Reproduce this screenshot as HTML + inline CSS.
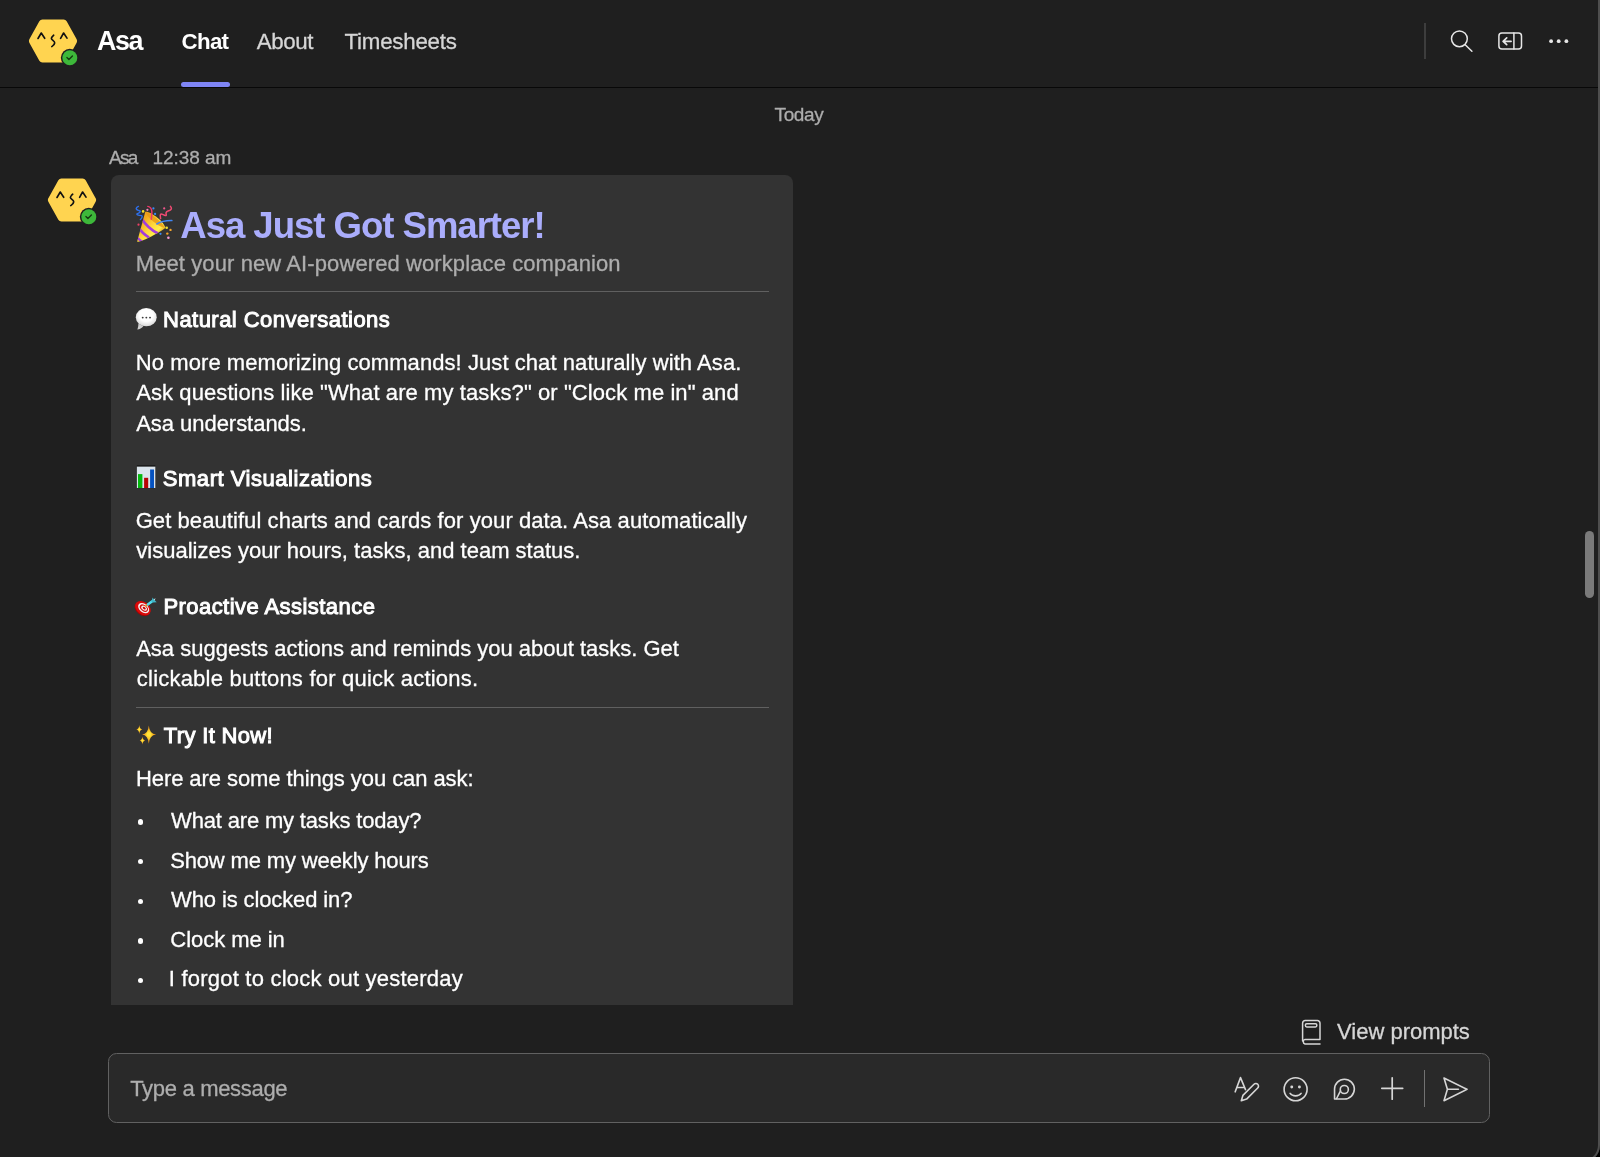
<!DOCTYPE html>
<html lang="en"><head><meta charset="utf-8"><title>Asa - Chat</title>
<style>
html,body{margin:0;padding:0;background:#1f1f1f;}
body{width:1600px;height:1157px;position:relative;overflow:hidden;font-family:"Liberation Sans", sans-serif;}
#root{position:absolute;left:0;top:0;width:1600px;height:1157px;will-change:transform}
.t{position:absolute;white-space:pre;font-family:"Liberation Sans", sans-serif;}
.i{position:absolute}
svg{display:block;width:100%;height:100%;overflow:visible}
#hdrline{position:absolute;left:0;top:86.8px;width:1598px;height:1.3px;background:#080808}
#tabline{position:absolute;left:181px;top:82px;width:49px;height:4.6px;border-radius:2.5px;background:#7f85f5}
#hdrsep{position:absolute;left:1424.4px;top:23px;width:1.3px;height:36px;background:#3d3d3d}
#card{position:absolute;left:111px;top:175px;width:682px;height:880px;background:#333333;border-radius:8px}
#cardmask{position:absolute;left:0;top:1004.7px;width:1600px;height:160px;background:#1f1f1f}
.rule{position:absolute;left:136px;width:633px;height:1.3px;background:#606060}
.bul{position:absolute;left:137.9px;width:5.4px;height:5.4px;border-radius:50%;background:#fff}
#compose{position:absolute;left:108.2px;top:1053.2px;width:1382px;height:69.9px;box-sizing:border-box;border:1.6px solid #616161;border-radius:8.5px;background:#292929}
#compsep{position:absolute;left:1423.5px;top:1070.2px;width:1.2px;height:36.5px;background:#727272}
#thumb{position:absolute;left:1584.8px;top:530.8px;width:9.2px;height:67px;border-radius:4.6px;background:#7a7a7a}
#winedge{position:absolute;left:-20px;top:-20px;width:1620px;height:1183px;box-sizing:border-box;border:2px solid #4e4e4e;border-radius:18px;box-shadow:0 0 0 40px #000;pointer-events:none}
</style></head>
<body>
<div id="root">
<div id="hdrline"></div>
<div class="i" style="left:25.3px;top:16px;width:56px;height:50px"><svg viewBox="-28 -25 56 50"><polygon points="-20.6,0 -10.6,-18.05 10.6,-18.05 20.6,0 10.6,18.05 -10.6,18.05" fill="#ffd450" stroke="#ffd450" stroke-width="7" stroke-linejoin="round"/><g fill="none" stroke="#111" stroke-width="1.65" stroke-linecap="round" stroke-linejoin="round"><path d="M-15,-2.5 L-11.75,-8 L-8.3,-2.7"/><path d="M7.6,-2.7 L10.6,-8 L14,-2.9"/><path d="M0.7,-5.8 C-0.6,-4.6 -1.7,-3.4 -1.6,-2.4 C-1.4,-0.9 1.8,0 1.7,1.9 C1.6,3.4 0.2,4.8 -1.2,5.6"/></g><circle cx="16.8" cy="16.8" r="9" fill="#1f1f1f"/><circle cx="16.8" cy="16.8" r="7.5" fill="#3db83a"/><path d="M13.9,16.6 L15.9,18.4 L19.4,15" fill="none" stroke="#14380f" stroke-width="1.4" stroke-linecap="round" stroke-linejoin="round"/></svg></div>
<div class="t" style="left:97.00px;top:22.00px;font-size:26.9px;line-height:38px;color:#ffffff;font-weight:700;letter-spacing:-1.387px;">Asa</div>
<div class="t" style="left:181.60px;top:26.00px;font-size:22.3px;line-height:31px;color:#ffffff;font-weight:700;letter-spacing:-0.707px;">Chat</div>
<div class="t" style="left:256.75px;top:26.00px;font-size:22.3px;line-height:31px;color:#d6d6d6;font-weight:400;letter-spacing:-0.393px;-webkit-text-stroke:0.3px #d6d6d6;">About</div>
<div class="t" style="left:344.55px;top:26.00px;font-size:22.3px;line-height:31px;color:#d6d6d6;font-weight:400;letter-spacing:-0.229px;-webkit-text-stroke:0.3px #d6d6d6;">Timesheets</div>
<div id="tabline"></div>
<div id="hdrsep"></div>
<div class="i" style="left:1447px;top:27px;width:28px;height:28px"><svg viewBox="0 0 28 28"><g fill="none" stroke="#e6e6e6" stroke-width="1.5" stroke-linecap="round"><circle cx="12.4" cy="11.8" r="7.9"/><path d="M18.2,17.7 L24.9,24.3"/></g></svg></div>
<div class="i" style="left:1496px;top:28px;width:28px;height:26px"><svg viewBox="0 0 28 26"><g fill="none" stroke="#e6e6e6" stroke-width="1.5" stroke-linecap="round" stroke-linejoin="round"><rect x="2.9" y="4.9" width="22.6" height="16.1" rx="3"/><path d="M17.9,5 V21"/><path d="M15.1,13.3 H7.2 M10.7,9.9 L7.1,13.3 L10.7,16.6" stroke-width="1.7"/></g></svg></div>
<div class="i" style="left:1546px;top:35px;width:26px;height:12px"><svg viewBox="0 0 26 12"><g fill="#e6e6e6"><circle cx="5.1" cy="6.2" r="1.9"/><circle cx="12.7" cy="6.2" r="1.9"/><circle cx="20.4" cy="6.2" r="1.9"/></g></svg></div>
<div class="t" style="left:774.55px;top:101.00px;font-size:19px;line-height:27px;color:#adadad;font-weight:400;letter-spacing:-0.375px;-webkit-text-stroke:0.3px #adadad;">Today</div>
<div class="t" style="left:109.05px;top:144.00px;font-size:19px;line-height:27px;color:#adadad;font-weight:400;letter-spacing:-1.686px;-webkit-text-stroke:0.3px #adadad;">Asa</div>
<div class="t" style="left:152.55px;top:144.00px;font-size:19px;line-height:27px;color:#adadad;font-weight:400;letter-spacing:-0.070px;-webkit-text-stroke:0.3px #adadad;">12:38 am</div>
<div class="i" style="left:43.75px;top:174.5px;width:56px;height:50px"><svg viewBox="-28 -25 56 50"><polygon points="-20.6,0 -10.6,-18.05 10.6,-18.05 20.6,0 10.6,18.05 -10.6,18.05" fill="#ffd450" stroke="#ffd450" stroke-width="7" stroke-linejoin="round"/><g fill="none" stroke="#111" stroke-width="1.65" stroke-linecap="round" stroke-linejoin="round"><path d="M-15,-2.5 L-11.75,-8 L-8.3,-2.7"/><path d="M7.6,-2.7 L10.6,-8 L14,-2.9"/><path d="M0.7,-5.8 C-0.6,-4.6 -1.7,-3.4 -1.6,-2.4 C-1.4,-0.9 1.8,0 1.7,1.9 C1.6,3.4 0.2,4.8 -1.2,5.6"/></g><circle cx="16.8" cy="16.8" r="9" fill="#1f1f1f"/><circle cx="16.8" cy="16.8" r="7.5" fill="#3db83a"/><path d="M13.9,16.6 L15.9,18.4 L19.4,15" fill="none" stroke="#14380f" stroke-width="1.4" stroke-linecap="round" stroke-linejoin="round"/></svg></div>
<div id="card"></div>
<div class="i" style="left:130px;top:200px;width:50px;height:48px"><svg viewBox="0 0 50 48"><defs><linearGradient id="pc" x1="0.15" y1="0.35" x2="0.75" y2="0.9"><stop offset="0" stop-color="#f2a81d"/><stop offset="0.45" stop-color="#ffd93b"/><stop offset="0.75" stop-color="#fff04a"/><stop offset="1" stop-color="#e39a14"/></linearGradient><clipPath id="pk"><path d="M7.1,41.8 L15.3,11.8 C20,10.5 34.5,22 35.4,27.9 C30,32 14,41 7.1,41.8 Z"/></clipPath></defs>
<path d="M7.1,41.8 L15.3,11.8 C20,10.5 34.5,22 35.4,27.9 C30,32 14,41 7.1,41.8 Z" fill="url(#pc)"/>
<g clip-path="url(#pk)" fill="none" stroke="#a23ddb" stroke-width="2.6"><path d="M11.5,18.5 C15,24 21,30 28,33.5"/><path d="M8.5,27.5 C11,31.5 15,35 19,37.5"/><path d="M5.5,35.8 C7.5,38 9.5,40 12,41.5" stroke-width="2.2"/></g>
<path d="M15.6,12.2 C19.5,12 33,22.5 34.6,27.6 C30.5,28 17,17.5 15.6,12.2 Z" fill="#e89a17" opacity="0.85"/>
<g fill="none" stroke-linecap="round" stroke-linejoin="round">
<path d="M8.4,6.4 C5.5,7.6 5.6,9.4 8,10.2 C11.6,11 10.4,12.6 7.4,13.6 C5.8,14.4 8,15.4 11.6,15.6 C13,16.4 11.5,18.4 10.4,19.6" stroke="#2f6fe8" stroke-width="1.45"/>
<path d="M17.8,6.4 C20.6,6.8 21.8,9.4 21.9,12 C21.9,14.6 21.5,17 21.3,19.2" stroke="#f0376a" stroke-width="1.45"/>
<path d="M40.5,6.4 C42,8 41.6,9.6 40,10.3 C37.6,11 36,11.6 36,13 C36.2,14.6 36.8,15.6 35.4,15.6 C33.4,15.2 31.6,13 30.6,14.2 C29.8,15.4 30.4,17 30.6,18.6" stroke="#f04a72" stroke-width="1.5"/>
<path d="M26.8,23.9 C31,21.4 36,20.4 41.8,20.5" stroke="#3f86f5" stroke-width="1.7"/></g>
<circle cx="13.1" cy="11.4" r="1.3" fill="#f5e12e"/><circle cx="17.4" cy="9.8" r="1.1" fill="#f58ac2"/><circle cx="23.4" cy="8.4" r="1.1" fill="#3a8bf5"/><circle cx="25.1" cy="13.9" r="1.1" fill="#3a8bf5"/><circle cx="34.2" cy="8.4" r="1.1" fill="#f0568c"/><circle cx="8.5" cy="24.7" r="1.1" fill="#ee3f66"/><circle cx="36.7" cy="27.7" r="1.3" fill="#f5e12e"/><circle cx="40.5" cy="29.9" r="1.2" fill="#f5a62e"/><circle cx="37.3" cy="33.6" r="1.2" fill="#f5a21e"/><circle cx="30.5" cy="33.8" r="1.1" fill="#3a8bf5"/><circle cx="38.4" cy="37.8" r="1.3" fill="#f59ad0"/></svg></div>
<div class="t" style="left:180.25px;top:200.00px;font-size:36.6px;line-height:51px;color:#aaadfc;font-weight:700;letter-spacing:-1.039px;">Asa Just Got Smarter!</div>
<div class="t" style="left:135.75px;top:248.00px;font-size:22px;line-height:31px;color:#adadad;font-weight:400;letter-spacing:0.099px;-webkit-text-stroke:0.3px #adadad;">Meet your new AI-powered workplace companion</div>
<div class="rule" style="top:290.8px"></div>
<div class="i" style="left:130px;top:304px;width:32px;height:30px"><svg viewBox="0 0 32 30"><defs><radialGradient id="sg" cx="0.5" cy="0.4" r="0.6"><stop offset="0.55" stop-color="#ffffff"/><stop offset="1" stop-color="#d9d9d9"/></radialGradient></defs><path d="M8.4,19.6 C8.4,22 8,24 7.3,25.6 C9.6,25.2 11.8,23.9 13.4,22.2 Z" fill="#cfcfcf"/><ellipse cx="16.25" cy="13.2" rx="10.45" ry="9.1" fill="url(#sg)"/><g fill="#3a3a3a"><circle cx="12.7" cy="13.6" r="0.95"/><circle cx="16.35" cy="13.6" r="0.95"/><circle cx="20" cy="13.6" r="0.95"/></g></svg></div>
<div class="t" style="left:163.10px;top:304.00px;font-size:22px;line-height:31px;color:#ffffff;font-weight:400;letter-spacing:0.452px;-webkit-text-stroke:1.0px #ffffff;">Natural Conversations</div>
<div class="t" style="left:135.85px;top:347.00px;font-size:22px;line-height:31px;color:#ffffff;font-weight:400;letter-spacing:0.069px;-webkit-text-stroke:0.3px #ffffff;">No more memorizing commands! Just chat naturally with Asa.</div>
<div class="t" style="left:136.20px;top:377.00px;font-size:22px;line-height:31px;color:#ffffff;font-weight:400;letter-spacing:0.087px;-webkit-text-stroke:0.3px #ffffff;">Ask questions like &quot;What are my tasks?&quot; or &quot;Clock me in&quot; and</div>
<div class="t" style="left:136.20px;top:408.00px;font-size:22px;line-height:31px;color:#ffffff;font-weight:400;letter-spacing:-0.037px;-webkit-text-stroke:0.3px #ffffff;">Asa understands.</div>
<div class="i" style="left:130px;top:462px;width:32px;height:30px"><svg viewBox="0 0 32 30"><rect x="6.9" y="3" width="18.4" height="1.2" fill="#1c1c1c"/><rect x="6.9" y="4.7" width="18.4" height="21.4" fill="#dbe4ec"/><rect x="8" y="12.1" width="4.4" height="14" fill="#05b80f"/><rect x="14.1" y="15.8" width="4.1" height="10.3" fill="#b70303"/><rect x="20.1" y="7.5" width="3.9" height="18.6" fill="#0552c0"/><rect x="6.9" y="26.1" width="18.4" height="0.7" fill="#262626"/></svg></div>
<div class="t" style="left:162.80px;top:463.00px;font-size:22px;line-height:31px;color:#ffffff;font-weight:400;letter-spacing:0.531px;-webkit-text-stroke:1.0px #ffffff;">Smart Visualizations</div>
<div class="t" style="left:135.65px;top:505.00px;font-size:22px;line-height:31px;color:#ffffff;font-weight:400;letter-spacing:0.076px;-webkit-text-stroke:0.3px #ffffff;">Get beautiful charts and cards for your data. Asa automatically</div>
<div class="t" style="left:136.35px;top:535.00px;font-size:22px;line-height:31px;color:#ffffff;font-weight:400;letter-spacing:0.005px;-webkit-text-stroke:0.3px #ffffff;">visualizes your hours, tasks, and team status.</div>
<div class="i" style="left:130px;top:591px;width:32px;height:30px"><svg viewBox="0 0 32 30"><g transform="translate(13 17.1) rotate(38)"><ellipse cx="0" cy="0.9" rx="8.6" ry="6.3" fill="#a80000"/><ellipse rx="8.6" ry="6.2" fill="#d90a0a"/><ellipse cx="0.5" cy="-0.4" rx="6.2" ry="4.2" fill="#f6f0f0"/><ellipse cx="0.7" cy="-0.5" rx="4.6" ry="3" fill="#d21212"/><ellipse cx="0.9" cy="-0.6" rx="3.2" ry="2" fill="#f6f0f0"/><ellipse cx="1" cy="-0.7" rx="1.7" ry="1.05" fill="#c80000"/></g><path d="M14.8,15.6 L16.6,14.2" stroke="#e8e08a" stroke-width="0.9"/><path d="M16.2,14.6 L17.6,13.5" stroke="#f08c10" stroke-width="1.8" stroke-linecap="round"/><path d="M17.8,13.4 L22.2,10.3" stroke="#4fdcee" stroke-width="2.5" stroke-linecap="round"/><path d="M21.4,10.8 L22.6,6.4 L24,8.6 L26.7,11.3 L23,11.6 Z" fill="#3fb6c8"/><path d="M23.6,8.3 L25.6,7.2 L24.6,9.4 Z" fill="#c9dfe6"/></svg></div>
<div class="t" style="left:163.40px;top:591.00px;font-size:22px;line-height:31px;color:#ffffff;font-weight:400;letter-spacing:0.449px;-webkit-text-stroke:1.0px #ffffff;">Proactive Assistance</div>
<div class="t" style="left:136.20px;top:633.00px;font-size:22px;line-height:31px;color:#ffffff;font-weight:400;letter-spacing:-0.004px;-webkit-text-stroke:0.3px #ffffff;">Asa suggests actions and reminds you about tasks. Get</div>
<div class="t" style="left:136.85px;top:663.00px;font-size:22px;line-height:31px;color:#ffffff;font-weight:400;letter-spacing:0.211px;-webkit-text-stroke:0.3px #ffffff;">clickable buttons for quick actions.</div>
<div class="rule" style="top:706.5px"></div>
<div class="i" style="left:130px;top:720px;width:32px;height:30px"><svg viewBox="0 0 32 30"><defs><radialGradient id="sp" cx="0.5" cy="0.5" r="0.5"><stop offset="0" stop-color="#ffea3c"/><stop offset="0.3" stop-color="#fcd42f"/><stop offset="0.7" stop-color="#f4a51e"/><stop offset="1" stop-color="#e88c14"/></radialGradient></defs><g fill="url(#sp)"><path d="M18.8,5.4 Q19.4,13.8 26.1,14.4 Q19.4,15 18.8,23.8 Q18.2,15 12,14.4 Q18.2,13.8 18.8,5.4 Z"/><path d="M9.3,5 Q9.6,9.2 12.4,9.5 Q9.6,9.8 9.3,14 Q9,9.8 6.3,9.5 Q9,9.2 9.3,5 Z"/><path d="M12.4,16.6 Q12.7,20.1 15.2,20.4 Q12.7,20.7 12.4,24.6 Q12.1,20.7 9.7,20.4 Q12.1,20.1 12.4,16.6 Z"/></g><circle cx="18.8" cy="14.4" r="2.1" fill="#ffe43a"/><circle cx="9.3" cy="9.5" r="1" fill="#ffe43a"/><circle cx="12.4" cy="20.4" r="0.95" fill="#ffe43a"/></svg></div>
<div class="t" style="left:163.80px;top:720.00px;font-size:22px;line-height:31px;color:#ffffff;font-weight:400;letter-spacing:0.339px;-webkit-text-stroke:1.0px #ffffff;">Try It Now!</div>
<div class="t" style="left:135.95px;top:763.00px;font-size:22px;line-height:31px;color:#ffffff;font-weight:400;letter-spacing:-0.073px;-webkit-text-stroke:0.3px #ffffff;">Here are some things you can ask:</div>
<div class="bul" style="top:819.30px"></div>
<div class="t" style="left:171.05px;top:805.00px;font-size:22px;line-height:31px;color:#ffffff;font-weight:400;letter-spacing:-0.169px;-webkit-text-stroke:0.3px #ffffff;">What are my tasks today?</div>
<div class="bul" style="top:858.90px"></div>
<div class="t" style="left:170.15px;top:845.00px;font-size:22px;line-height:31px;color:#ffffff;font-weight:400;letter-spacing:-0.139px;-webkit-text-stroke:0.3px #ffffff;">Show me my weekly hours</div>
<div class="bul" style="top:898.55px"></div>
<div class="t" style="left:171.05px;top:884.00px;font-size:22px;line-height:31px;color:#ffffff;font-weight:400;letter-spacing:-0.122px;-webkit-text-stroke:0.3px #ffffff;">Who is clocked in?</div>
<div class="bul" style="top:938.20px"></div>
<div class="t" style="left:170.35px;top:924.00px;font-size:22px;line-height:31px;color:#ffffff;font-weight:400;letter-spacing:-0.048px;-webkit-text-stroke:0.3px #ffffff;">Clock me in</div>
<div class="bul" style="top:977.80px"></div>
<div class="t" style="left:168.75px;top:963.00px;font-size:22px;line-height:31px;color:#ffffff;font-weight:400;letter-spacing:0.221px;-webkit-text-stroke:0.3px #ffffff;">I forgot to clock out yesterday</div>
<div id="cardmask"></div>
<div class="i" style="left:1299px;top:1018px;width:24px;height:28px"><svg viewBox="0 0 24 28"><g fill="none" stroke="#d6d6d6" stroke-width="1.5" stroke-linecap="round" stroke-linejoin="round"><path d="M3.6,23 V5.2 a2.6,2.6 0 0 1 2.6,-2.6 H18.4 a2.6,2.6 0 0 1 2.6,2.6 V21.4 H6 a2.4,2.4 0 0 0 0,4.6 H21"/><rect x="6.4" y="5.7" width="11.4" height="3.2" rx="1.3"/></g></svg></div>
<div class="t" style="left:1337.05px;top:1016.00px;font-size:22px;line-height:31px;color:#d6d6d6;font-weight:400;letter-spacing:-0.006px;-webkit-text-stroke:0.3px #d6d6d6;">View prompts</div>
<div id="compose"></div>
<div class="t" style="left:130.15px;top:1073.00px;font-size:22px;line-height:31px;color:#adadad;font-weight:400;letter-spacing:-0.307px;-webkit-text-stroke:0.3px #adadad;">Type a message</div>
<div class="i" style="left:1232px;top:1074px;width:30px;height:30px"><svg viewBox="0 0 30 30"><g fill="none" stroke="#d6d6d6" stroke-width="1.6" stroke-linecap="round" stroke-linejoin="round"><path d="M3.2,17.8 L8.5,3.6 L13.5,15.6"/><path d="M5.2,13.5 H12.2"/><path d="M22,10.2 A2.65,2.65 0 0 1 25.7,14 L14.6,25.1 L9.3,26.8 L10.9,21.4 Z"/></g></svg></div>
<div class="i" style="left:1281px;top:1075px;width:29px;height:29px"><svg viewBox="0 0 29 29"><circle cx="14.6" cy="14.3" r="11.5" fill="none" stroke="#d6d6d6" stroke-width="1.6"/><circle cx="10.75" cy="12" r="1.45" fill="#d6d6d6"/><circle cx="18.4" cy="12" r="1.45" fill="#d6d6d6"/><path d="M9.1,18.4 C11.4,21.7 17.8,21.7 20.1,18.4" fill="none" stroke="#d6d6d6" stroke-width="1.6" stroke-linecap="round"/></svg></div>
<div class="i" style="left:1330px;top:1075px;width:28px;height:28px"><svg viewBox="0 0 28 28"><g fill="none" stroke="#d6d6d6" stroke-width="1.6" stroke-linecap="round" stroke-linejoin="round"><path d="M4.55,24 V14.1 a9.9,9.9 0 1 1 9.9,9.9 Z"/><circle cx="14.3" cy="14.5" r="4.05"/><path d="M10.5,15.9 L6.6,23.5"/></g></svg></div>
<div class="i" style="left:1378px;top:1075px;width:28px;height:28px"><svg viewBox="0 0 28 28"><path d="M3.8,13.3 H24.7 M14.2,2.8 V24.2" fill="none" stroke="#d6d6d6" stroke-width="1.7" stroke-linecap="round"/></svg></div>
<div id="compsep"></div>
<div class="i" style="left:1440px;top:1074px;width:30px;height:30px"><svg viewBox="0 0 30 30"><path d="M4,4 L27,15.3 L4,26.7 L7.4,15.3 Z M7.4,15.3 H18.4" fill="none" stroke="#d6d6d6" stroke-width="1.6" stroke-linecap="round" stroke-linejoin="round"/></svg></div>
<div id="thumb"></div>
<div id="winedge"></div>
</div>
</body></html>
